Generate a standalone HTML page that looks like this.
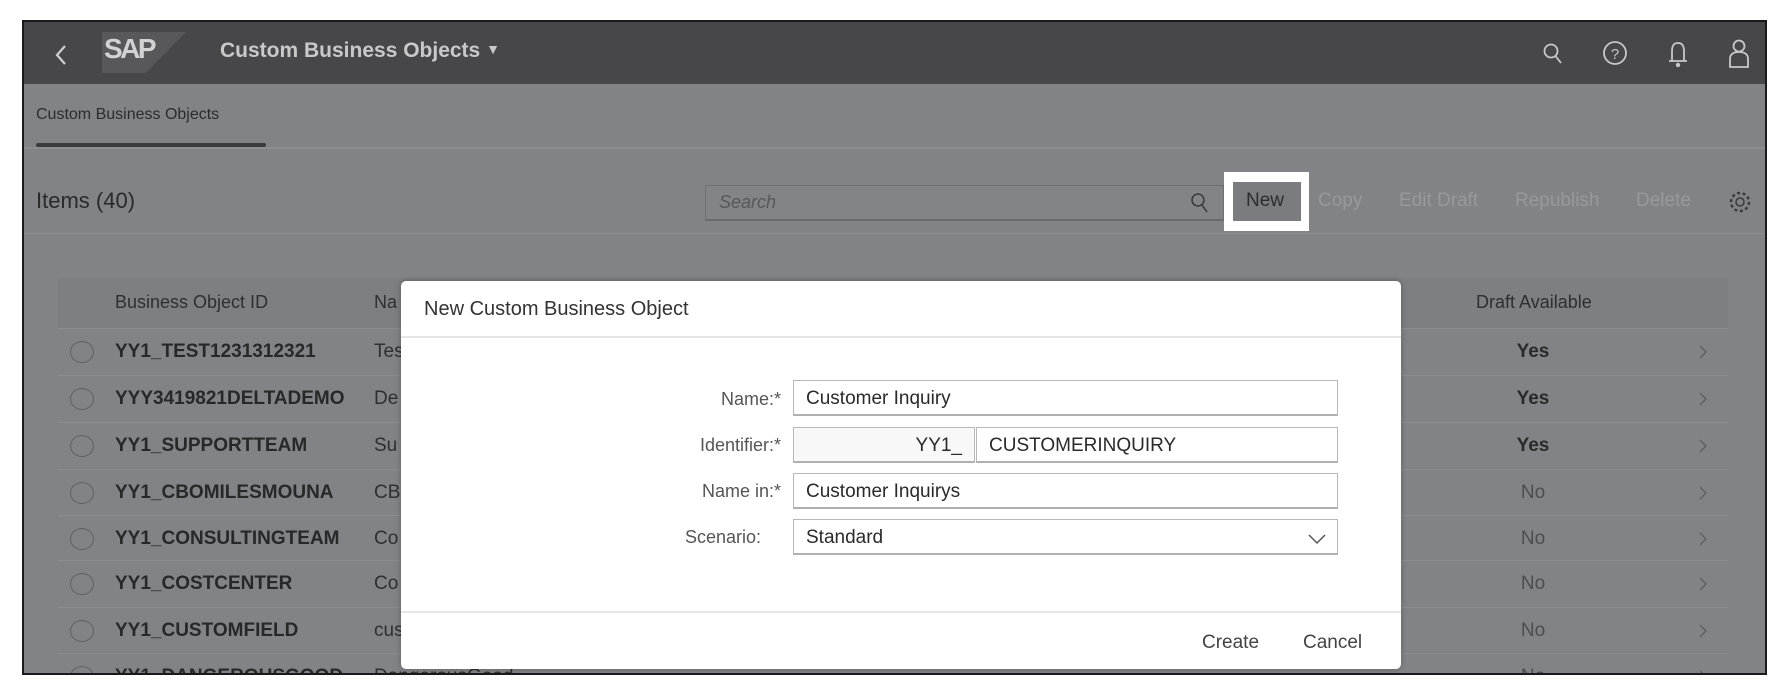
<!DOCTYPE html>
<html><head><meta charset="utf-8">
<style>
*{margin:0;padding:0;box-sizing:border-box}
body{width:1785px;height:692px;background:#fff;position:relative;overflow:hidden;font-family:"Liberation Sans",sans-serif}
.a{position:absolute;white-space:nowrap}
#frame{position:absolute;left:22px;top:20px;width:1745px;height:655px;border:2px solid #1a1a1a;background:#828387;overflow:hidden}
.row{position:absolute;left:34px;width:1670px;height:47px;border-top:1px solid #8c8d90}
.rad{position:absolute;left:12px;top:12px;width:24px;height:22px;border:1.5px solid #5e5f62;border-radius:50%}
.id{position:absolute;left:57px;top:12px;font-size:19px;font-weight:bold;color:#27282a}
.nm{position:absolute;left:316px;top:12px;font-size:19px;color:#2e2f31}
.dr{position:absolute;left:1435px;top:12px;width:80px;text-align:center;font-size:19px;color:#2a2a2a}
.chev{position:absolute;left:1640px;top:15px;width:10px;height:16px}
.lbl{position:absolute;width:200px;text-align:right;font-size:18px;color:#555}
.inp{position:absolute;height:36px;border:1px solid #b8b8b8;border-bottom:2px solid #b0b0b0;background:#fff;font-size:19px;color:#2a2a2a;padding:7px 12px}
</style></head><body>
<div id="frame">
 <div class="a" style="left:0;top:0;width:1745px;height:62px;background:#47474a"></div>
 <svg class="a" style="left:30px;top:22px" width="14" height="22"><path d="M11 2 L3 11 L11 20" stroke="#cfcfcf" stroke-width="2.2" fill="none"/></svg>
 <div class="a" style="left:78px;top:10px;width:84px;height:41px;background:#58585b;clip-path:polygon(0 0,100% 0,52% 100%,0 100%)"></div>
 <div class="a" style="left:80px;top:11px;font-size:28px;font-weight:bold;color:#d2d2d3;letter-spacing:-2.5px">SAP</div>
 <div class="a" style="left:196px;top:17px;font-size:21px;font-weight:bold;color:#c9c9ca">Custom Business Objects <span style="font-size:14px;position:relative;top:-3px">▼</span></div>
 <svg class="a" style="left:1518px;top:20px" width="24" height="26"><circle cx="9" cy="9" r="6.5" stroke="#c8c8c8" stroke-width="1.8" fill="none"/><path d="M13.5 14 L19 21" stroke="#c8c8c8" stroke-width="1.8"/></svg>
 <svg class="a" style="left:1579px;top:18px" width="26" height="28"><circle cx="12" cy="13" r="11" stroke="#c8c8c8" stroke-width="1.8" fill="none"/><text x="12" y="19" text-anchor="middle" font-family="Liberation Sans" font-size="15" fill="#c8c8c8">?</text></svg>
 <svg class="a" style="left:1643px;top:18px" width="24" height="30"><path d="M5 21 L5 11 Q5 3 11 3 Q17 3 17 11 L17 21 Z M2 21 L20 21" stroke="#c8c8c8" stroke-width="1.8" fill="none"/><circle cx="11" cy="25" r="2.2" fill="#c8c8c8"/></svg>
 <svg class="a" style="left:1704px;top:16px" width="22" height="32"><circle cx="11" cy="8" r="5.5" stroke="#c8c8c8" stroke-width="1.8" fill="none"/><path d="M2 29 L2 21 Q2 14 11 14 Q20 14 20 21 L20 29 Z" stroke="#c8c8c8" stroke-width="1.8" fill="none"/></svg>
 <div class="a" style="left:12px;top:84px;font-size:16px;color:#2c2c2e">Custom Business Objects</div>
 <div class="a" style="left:12px;top:121px;width:230px;height:4px;background:#3a3b3e;border-radius:2px"></div>
 <div class="a" style="left:0;top:125px;width:1745px;height:2px;background:#8d8e91"></div>
 <div class="a" style="left:12px;top:166px;font-size:22px;color:#2a2a2c">Items (40)</div>
 <div class="a" style="left:681px;top:163px;width:519px;height:36px;border:1px solid #6f7073;border-bottom:2px solid #6a6b6e;background:#838488"></div>
 <div class="a" style="left:695px;top:170px;font-size:18px;font-style:italic;color:#56575a">Search</div>
 <svg class="a" style="left:1166px;top:170px" width="22" height="24"><circle cx="8" cy="8" r="6" stroke="#3c3d40" stroke-width="1.6" fill="none"/><path d="M12 13 L17 20" stroke="#3c3d40" stroke-width="1.6"/></svg>
 <div class="a" style="left:1200px;top:150px;width:85px;height:59px;background:#fff"></div>
 <div class="a" style="left:1209px;top:160px;width:68px;height:39px;background:#7b7c80"></div>
 <div class="a" style="left:1222px;top:168px;font-size:19px;color:#2c2c2e">New</div>
 <div class="a" style="left:1294px;top:168px;font-size:19px;color:#98999c">Copy</div>
 <div class="a" style="left:1375px;top:168px;font-size:19px;color:#98999c">Edit Draft</div>
 <div class="a" style="left:1491px;top:168px;font-size:19px;color:#98999c">Republish</div>
 <div class="a" style="left:1612px;top:168px;font-size:19px;color:#98999c">Delete</div>
 <svg class="a" style="left:1703px;top:167px" width="26" height="26"><circle cx="13" cy="13" r="4" stroke="#3a3b3e" stroke-width="1.6" fill="none"/><circle cx="13" cy="13" r="9" stroke="#3a3b3e" stroke-width="2.5" fill="none" stroke-dasharray="3 2.6"/></svg>
 <div class="a" style="left:0;top:211px;width:1745px;height:1px;background:#8c8d90"></div>
 <div class="a" style="left:34px;top:256px;width:1670px;height:50px;background:#7e7f83"></div>
 <div class="a" style="left:91px;top:270px;font-size:18px;color:#2e2f31">Business Object ID</div>
 <div class="a" style="left:350px;top:270px;font-size:18px;color:#2e2f31">Na</div>
 <div class="a" style="left:1452px;top:270px;font-size:18px;color:#2e2f31">Draft Available</div>
 <div class="row" style="top:306px"><div class="rad"></div><div class="id">YY1_TEST1231312321</div><div class="nm">Tes</div><div class="dr" style="font-weight:bold">Yes</div><svg class="chev"><path d="M2 2 L8 8 L2 14" stroke="#5c5d60" stroke-width="1.3" fill="none"/></svg></div>
 <div class="row" style="top:353px"><div class="rad"></div><div class="id">YYY3419821DELTADEMO</div><div class="nm">De</div><div class="dr" style="font-weight:bold">Yes</div><svg class="chev"><path d="M2 2 L8 8 L2 14" stroke="#5c5d60" stroke-width="1.3" fill="none"/></svg></div>
 <div class="row" style="top:400px"><div class="rad"></div><div class="id">YY1_SUPPORTTEAM</div><div class="nm">Su</div><div class="dr" style="font-weight:bold">Yes</div><svg class="chev"><path d="M2 2 L8 8 L2 14" stroke="#5c5d60" stroke-width="1.3" fill="none"/></svg></div>
 <div class="row" style="top:447px"><div class="rad"></div><div class="id">YY1_CBOMILESMOUNA</div><div class="nm">CB</div><div class="dr" style="color:#4c4d50">No</div><svg class="chev"><path d="M2 2 L8 8 L2 14" stroke="#5c5d60" stroke-width="1.3" fill="none"/></svg></div>
 <div class="row" style="top:493px"><div class="rad"></div><div class="id">YY1_CONSULTINGTEAM</div><div class="nm">Co</div><div class="dr" style="color:#4c4d50">No</div><svg class="chev"><path d="M2 2 L8 8 L2 14" stroke="#5c5d60" stroke-width="1.3" fill="none"/></svg></div>
 <div class="row" style="top:538px"><div class="rad"></div><div class="id">YY1_COSTCENTER</div><div class="nm">Co</div><div class="dr" style="color:#4c4d50">No</div><svg class="chev"><path d="M2 2 L8 8 L2 14" stroke="#5c5d60" stroke-width="1.3" fill="none"/></svg></div>
 <div class="row" style="top:585px"><div class="rad"></div><div class="id">YY1_CUSTOMFIELD</div><div class="nm">cus</div><div class="dr" style="color:#4c4d50">No</div><svg class="chev"><path d="M2 2 L8 8 L2 14" stroke="#5c5d60" stroke-width="1.3" fill="none"/></svg></div>
 <div class="row" style="top:631px"><div class="rad"></div><div class="id">YY1_DANGEROUSGOOD</div><div class="nm">DangerousGood</div><div class="dr" style="color:#4c4d50">No</div><svg class="chev"><path d="M2 2 L8 8 L2 14" stroke="#5c5d60" stroke-width="1.3" fill="none"/></svg></div>
 <div class="a" style="left:377px;top:259px;width:1000px;height:388px;background:#fff;border-radius:5px;box-shadow:0 0 6px rgba(0,0,0,.3)">
  <div class="a" style="left:23px;top:17px;font-size:20px;color:#333">New Custom Business Object</div>
  <div class="a" style="left:0;top:55px;width:1000px;height:2px;background:#e6e6e6"></div>
  <div class="lbl" style="left:180px;top:108px">Name:*</div>
  <div class="lbl" style="left:180px;top:154px">Identifier:*</div>
  <div class="lbl" style="left:180px;top:200px">Name in:*</div>
  <div class="lbl" style="left:160px;top:246px;width:220px;text-align:right;padding-right:20px">Scenario:</div>
  <div class="inp" style="left:392px;top:99px;width:545px">Customer Inquiry</div>
  <div class="inp" style="left:392px;top:146px;width:182px;background:#f8f8f8;text-align:right;padding-right:12px">YY1_</div>
  <div class="inp" style="left:575px;top:146px;width:362px">CUSTOMERINQUIRY</div>
  <div class="inp" style="left:392px;top:192px;width:545px">Customer Inquirys</div>
  <div class="inp" style="left:392px;top:238px;width:545px">Standard</div>
  <svg class="a" style="left:906px;top:251px" width="20" height="14"><path d="M2 3 L10 11 L18 3" stroke="#555" stroke-width="1.5" fill="none"/></svg>
  <div class="a" style="left:0;top:330px;width:1000px;height:2px;background:#e6e6e6"></div>
  <div class="a" style="left:801px;top:351px;font-size:19px;color:#444">Create</div>
  <div class="a" style="left:902px;top:351px;font-size:19px;color:#444">Cancel</div>
 </div>
</div>
</body></html>
